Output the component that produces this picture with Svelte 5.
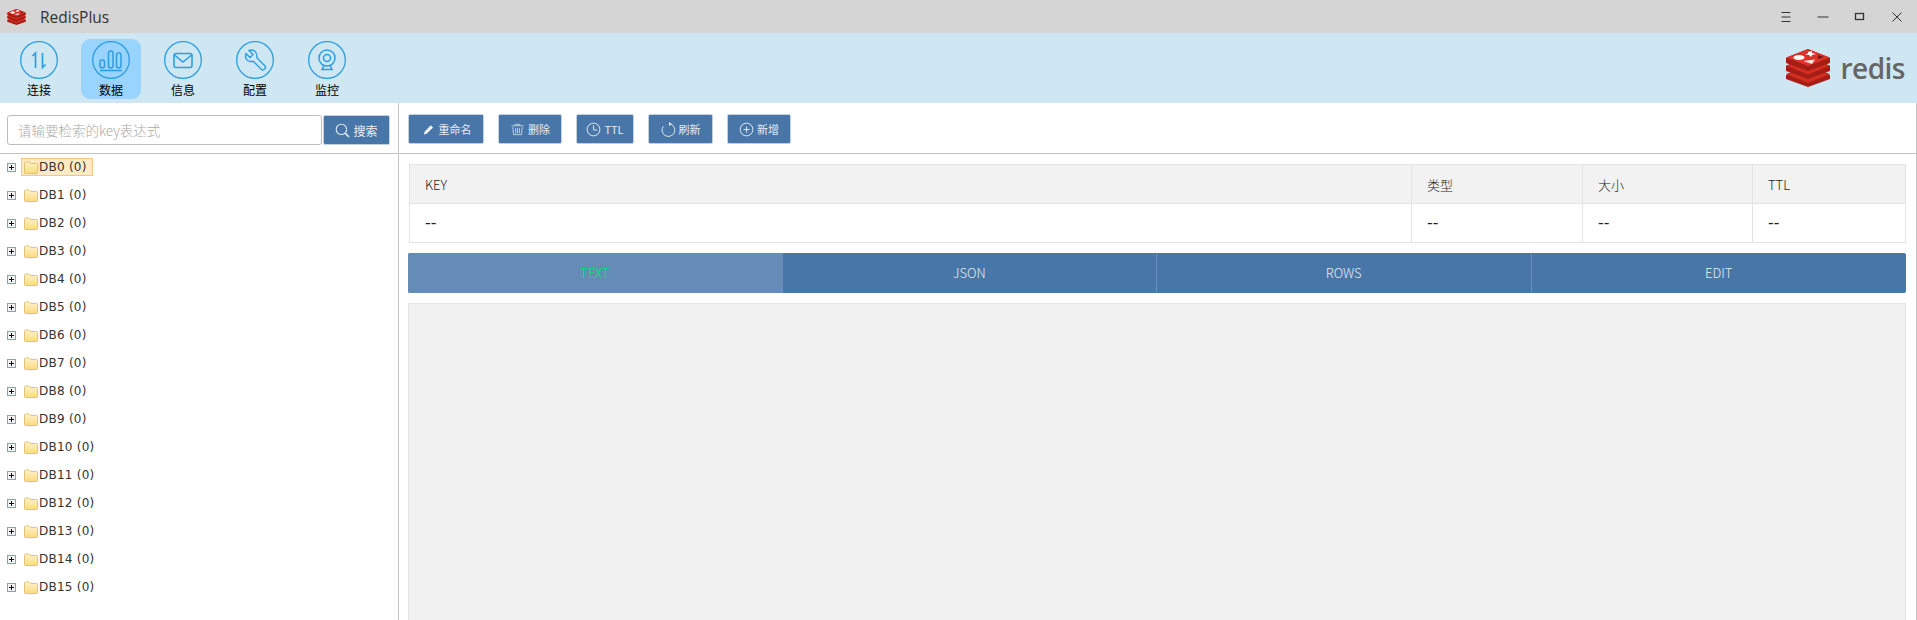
<script>
  const navItems = [
    { label: "连接", icon: "swap" },
    { label: "数据", icon: "bars", active: true },
    { label: "信息", icon: "mail" },
    { label: "配置", icon: "wrench" },
    { label: "监控", icon: "cam" },
  ];
  const dbs = Array.from({ length: 16 }, (_, i) => `DB${i} (0)`);
  const actions = [
    { label: "重命名", icon: "pen", width: 76 },
    { label: "删除", icon: "trash", width: 64 },
    { label: "TTL", icon: "clock", width: 58 },
    { label: "刷新", icon: "refresh", width: 65 },
    { label: "新增", icon: "plus", width: 64 },
  ];
  const tabs = ["TEXT", "JSON", "ROWS", "EDIT"];
</script>

{#snippet redisMark(cls)}
  <svg class={cls} viewBox="0 0 44 38">
    <path d="M0 26 L22 17 L44 26 V30 L22 38 L0 30 Z" fill="#a51d14" />
    <path d="M0 25 L22 16 L44 25 L22 34 Z" fill="#d42e22" />
    <path d="M0 17 L22 8 L44 17 V22 L22 30 L0 22 Z" fill="#a51d14" />
    <path d="M0 16.500 L22 8 L44 16.500 L22 25.500 Z" fill="#d42e22" />
    <path d="M0 9 L22 0 L44 9 V14 L22 22 L0 14 Z" fill="#a51d14" />
    <path d="M0 8.500 L22 0 L44 8.500 L22 17 Z" fill="#d9332a" />
    <ellipse cx="13" cy="8.500" rx="5.500" ry="2.500" fill="#fff" />
    <path d="M22 3 L26 2 L26 4 L30 5 L26 6 L25 8 L23 6 L19 5.500 L22 4.500 Z" fill="#fff" />
    <path d="M17 12 L29 10.500 L26 15 Z" fill="#fbe3e0" />
    <path d="M32 6 L38 8 L32 10 Z" fill="#7a1610" />
  </svg>
{/snippet}

{#snippet navIcon(name)}
  <svg class="nav-icon" viewBox="0 0 38 38" fill="none" stroke="#2b9fe0" stroke-width="1.300">
    <circle cx="19" cy="19" r="18.300" />
    {#if name === "swap"}
      <path d="M12.500 15 L15.500 12 V27 M25.500 23.500 L22.500 26.500 V12" stroke-width="1.700" />
    {:else if name === "bars"}
      <rect x="8" y="19" width="4.500" height="8" rx="2.200" stroke-width="1.500" />
      <rect x="16.500" y="10" width="4.500" height="17" rx="2.200" stroke-width="1.500" />
      <rect x="24.500" y="12" width="4.500" height="15" rx="2.200" stroke-width="1.500" />
      <path d="M8 29.500 H30" stroke-width="1.500" />
    {:else if name === "mail"}
      <rect x="10" y="12.500" width="18" height="14" rx="2" stroke-width="1.600" />
      <path d="M10.500 14 L19 21 L27.500 14" stroke-width="1.600" />
    {:else if name === "wrench"}
      <path d="M10 12.500 L14 16.500 L17 13.500 L13 9.500 C17 8 21 10 20.800 15 L21 17 L29 25 C30.500 27 27.500 30 25.500 28.500 L17.500 20.500 L15.500 20.500 C11 21 8.500 17 10 12.500 Z" stroke-width="1.400" />
    {:else}
      <circle cx="19" cy="17" r="8" stroke-width="1.500" />
      <circle cx="19" cy="17" r="3.500" stroke-width="1.500" />
      <path d="M15.500 24.500 L14.500 28.500 H23.500 L22.500 24.500 M13 28.500 H25" stroke-width="1.500" />
    {/if}
  </svg>
{/snippet}

{#snippet actionIcon(name)}
  <svg class="act-icon" viewBox="0 0 16 16" fill="none" stroke="#e6edf4" stroke-width="1">
    {#if name === "pen"}
      <path d="M3 13.500 L4 10 L10.500 3.500 L12.800 5.800 L6.300 12.300 Z" fill="#f2f5f8" stroke="none" />
    {:else if name === "trash"}
      <path d="M1.500 4 H14.500 M5 2.500 H11 M3 5.500 L3.800 13.500 H12.200 L13 5.500 M6 6.500 V12 M8 6.500 V12 M10 6.500 V12" stroke="#c6d4e3" />
    {:else if name === "clock"}
      <circle cx="8" cy="8" r="6.800" />
      <path d="M8 3.500 V8.500 H12" />
    {:else if name === "refresh"}
      <path d="M10.300 2.200 A6.800 6.800 0 1 1 2.500 4.500" />
      <path d="M8.500 0 L11.500 2.200 L8.500 4.200 Z" fill="#e6edf4" stroke="none" />
    {:else}
      <circle cx="8" cy="8" r="6.800" />
      <path d="M4.800 8 H11.200 M8 4.800 V11.200" />
    {/if}
  </svg>
{/snippet}

<div class="window">
  <header class="titlebar">
    {@render redisMark("title-logo")}
    <span class="title">RedisPlus</span>
    <div class="win-controls">
      <svg viewBox="0 0 12 12" stroke="#333" fill="none"><path d="M1.500 1.500 H10.500 M1.500 6 H10.500 M1.500 10.500 H10.500" /></svg>
      <svg viewBox="0 0 12 12" stroke="#333" fill="none"><path d="M0.500 6 H11.500" /></svg>
      <svg viewBox="0 0 12 12" stroke="#333" fill="none"><rect x="1.500" y="2.500" width="8" height="6" stroke-width="1.300" /></svg>
      <svg viewBox="0 0 12 12" stroke="#333" fill="none"><path d="M1.500 1.500 L10.500 10.500 M10.500 1.500 L1.500 10.500" /></svg>
    </div>
  </header>

  <nav class="toolbar">
    {#each navItems as item}
      <div class="nav-item" class:active={item.active}>
        {@render navIcon(item.icon)}
        <span>{item.label}</span>
      </div>
    {/each}
    <div class="brand">
      {@render redisMark("brand-logo")}
      <span class="brand-text">redis</span>
    </div>
  </nav>

  <main class="body">
    <aside class="left">
      <div class="search-row">
        <input class="search" placeholder="请输要检索的key表达式" />
        <button class="search-btn">
          <svg class="act-icon search-icon" viewBox="0 0 16 16" fill="none" stroke="#e6edf4" stroke-width="1.100">
            <circle cx="6.800" cy="6.800" r="5.500" />
            <path d="M10.800 10.800 L15 15" stroke-width="1.600" />
          </svg>
          搜索
        </button>
      </div>
      <ul class="tree">
        {#each dbs as db, i}
          <li>
            <span class="expander"></span>
            <span class="node" class:selected={i === 0}>
              <svg class="folder" viewBox="0 0 14 13">
                <defs>
                  <linearGradient id="folder-fill-{i}" x1="0" y1="0" x2="0" y2="1">
                    <stop offset="0" stop-color="#fff3c4" />
                    <stop offset="1" stop-color="#f8dc80" />
                  </linearGradient>
                </defs>
                <path d="M0.500 2 Q0.500 1 1.500 1 H5 L6.500 2.500 H12.500 Q13.500 2.500 13.500 3.500 V11.500 Q13.500 12.500 12.500 12.500 H1.500 Q0.500 12.500 0.500 11.500 Z" fill="url(#folder-fill-{i})" stroke="#d9b75f" stroke-width="0.800" />
              </svg>
              {db}
            </span>
          </li>
        {/each}
      </ul>
    </aside>

    <section class="right">
      <div class="actions">
        {#each actions as a}
          <button class="act" style="width: {a.width}px">
            {@render actionIcon(a.icon)}
            {a.label}
          </button>
        {/each}
      </div>
      <div class="content">
        <div class="grid">
          <div class="cell head">KEY</div>
          <div class="cell head">类型</div>
          <div class="cell head">大小</div>
          <div class="cell head">TTL</div>
          <div class="cell value">--</div>
          <div class="cell value">--</div>
          <div class="cell value">--</div>
          <div class="cell value">--</div>
        </div>
        <div class="tabs">
          {#each tabs as t, i}
            <div class="tab" class:current={i === 0}>{t}</div>
          {/each}
        </div>
        <div class="textarea"></div>
      </div>
    </section>
  </main>
</div>

<style>
  :global(body) {
    margin: 0;
    background: #fff;
  }
  .window {
    height: 620px;
    display: flex;
    flex-direction: column;
    overflow: hidden;
    font-family: "Noto Sans CJK SC", "Noto Sans", sans-serif;
    color: #111;
  }
  .titlebar {
    height: 33px;
    flex-shrink: 0;
    background: #d5d5d5;
    display: flex;
    align-items: center;
    padding-left: 6px;
  }
  .title-logo {
    width: 21px;
    height: 16px;
  }
  .title {
    margin-left: 13px;
    font-family: "Open Sans", sans-serif;
    font-size: 15.5px;
    color: #333;
  }
  .win-controls {
    margin-left: auto;
    display: flex;
    gap: 25px;
    padding-right: 14px;
  }
  .win-controls svg {
    width: 12px;
    height: 12px;
  }
  .toolbar {
    height: 70px;
    flex-shrink: 0;
    background: #cfe6f3;
    display: flex;
    align-items: flex-start;
    gap: 12px;
    padding: 6px 12px 0 9px;
    box-sizing: border-box;
  }
  .nav-item {
    width: 60px;
    height: 60px;
    border-radius: 9px;
    display: flex;
    flex-direction: column;
    align-items: center;
    padding-top: 2px;
    box-sizing: border-box;
    font-size: 12px;
    line-height: 17px;
    color: #000;
  }
  .nav-item.active {
    background: #99d3ff;
  }
  .nav-icon {
    width: 38px;
    height: 38px;
    margin-bottom: 2px;
  }
  .brand {
    margin-left: auto;
    display: flex;
    align-items: center;
    gap: 10px;
    margin-top: 10px;
  }
  .brand-logo {
    width: 44px;
    height: 38px;
  }
  .brand-text {
    font-family: "Open Sans", sans-serif;
    font-weight: 600;
    font-size: 28px;
    line-height: 34px;
    color: #666;
    letter-spacing: -0.5px;
  }
  .body {
    flex: 1;
    min-height: 0;
    display: grid;
    grid-template-columns: 399px 1fr;
  }
  .left {
    border-right: 1px solid #c4c4c4;
    min-height: 0;
  }
  .search-row {
    height: 51px;
    box-sizing: border-box;
    border-bottom: 1px solid #c4c4c4;
    display: flex;
    align-items: flex-start;
    gap: 1px;
    padding: 12px 0 0 7px;
  }
  .search {
    width: 315px;
    height: 30px;
    box-sizing: border-box;
    border: 1px solid #bdbdbd;
    border-radius: 3px;
    padding: 0 10px;
    font-family: inherit;
    font-size: 13.5px;
    font-weight: 300;
    outline: none;
  }
  .search::placeholder {
    color: #a9a9a9;
  }
  .search-btn {
    width: 67px;
    height: 30px;
    border: 1px solid #c3d0de;
    border-radius: 2px;
    background: #4876a8;
    color: #eef3f8;
    font-family: inherit;
    font-size: 12px;
    padding: 0;
    display: flex;
    align-items: center;
    justify-content: center;
    gap: 3px;
  }
  .search-icon {
    width: 15px;
    height: 15px;
  }
  .tree {
    list-style: none;
    margin: 0;
    padding: 4px 0 0 7px;
    font-family: "DejaVu Sans", sans-serif;
    font-size: 12px;
    letter-spacing: 0.25px;
    color: #333;
  }
  .tree li {
    height: 28px;
    display: flex;
    align-items: flex-start;
  }
  .expander {
    position: relative;
    width: 9px;
    height: 9px;
    box-sizing: border-box;
    margin-top: 5px;
    border: 1px solid #8aa0b8;
    background: #f4f4f4;
    flex-shrink: 0;
  }
  .expander::before {
    content: "";
    position: absolute;
    left: 1px;
    top: 3px;
    width: 5px;
    height: 1px;
    background: #111;
  }
  .expander::after {
    content: "";
    position: absolute;
    left: 3px;
    top: 1px;
    width: 1px;
    height: 5px;
    background: #111;
  }
  .node {
    display: flex;
    align-items: center;
    gap: 1px;
    height: 18px;
    margin-left: 6px;
    padding: 0 5px 0 1px;
    border: 1px solid transparent;
    box-sizing: border-box;
    white-space: nowrap;
  }
  .node.selected {
    background: #ffeac4;
    border-color: #f6c77e;
    padding-left: 2px;
    margin-left: 5px;
  }
  .folder {
    width: 14px;
    height: 13px;
    flex-shrink: 0;
  }
  .right {
    display: flex;
    flex-direction: column;
    min-height: 0;
    border-right: 1px solid #c4c4c4;
  }
  .actions {
    height: 51px;
    flex-shrink: 0;
    box-sizing: border-box;
    border-bottom: 1px solid #c4c4c4;
    display: flex;
    align-items: flex-start;
    gap: 14px;
    padding: 11px 0 0 9px;
  }
  .act {
    height: 30px;
    box-sizing: border-box;
    border: 1px solid #c3d0de;
    border-radius: 2px;
    background: #4876a8;
    color: #e6edf4;
    font-family: inherit;
    font-size: 11px;
    padding: 0;
    display: flex;
    align-items: center;
    justify-content: center;
    gap: 3px;
  }
  .act-icon {
    width: 15px;
    height: 15px;
    flex-shrink: 0;
  }
  .content {
    flex: 1;
    min-height: 0;
    display: flex;
    flex-direction: column;
    padding: 10px 10px 0 9px;
  }
  .grid {
    display: grid;
    grid-template-columns: 1002px 171px 170px 1fr;
    margin-left: 1px;
    border-top: 1px solid #e4e4e4;
    border-left: 1px solid #e4e4e4;
    flex-shrink: 0;
  }
  .cell {
    height: 39px;
    box-sizing: border-box;
    padding-left: 15px;
    border-right: 1px solid #e4e4e4;
    border-bottom: 1px solid #e4e4e4;
    display: flex;
    align-items: center;
    font-size: 13px;
    font-weight: 300;
    color: #222;
  }
  .cell.head {
    background: #f2f2f2;
  }
  .cell.value {
    font-family: "Liberation Sans", sans-serif;
    font-size: 17px;
  }
  .tabs {
    margin-top: 10px;
    height: 40px;
    flex-shrink: 0;
    display: grid;
    grid-template-columns: repeat(4, 1fr);
    background: #4876a8;
    border-radius: 2px;
    overflow: hidden;
  }
  .tab {
    display: flex;
    align-items: center;
    justify-content: center;
    padding-bottom: 2px;
    font-size: 13px;
    font-weight: 300;
    color: #e6edf4;
    border-right: 1px solid #6a90b8;
  }
  .tab:last-child {
    border-right: 0;
  }
  .tab.current {
    background: #648cb7;
    color: #00e676;
  }
  .textarea {
    margin-top: 10px;
    flex: 1;
    background: #f1f1f1;
    border: 1px solid #e4e4e4;
    border-bottom: 0;
  }
</style>
